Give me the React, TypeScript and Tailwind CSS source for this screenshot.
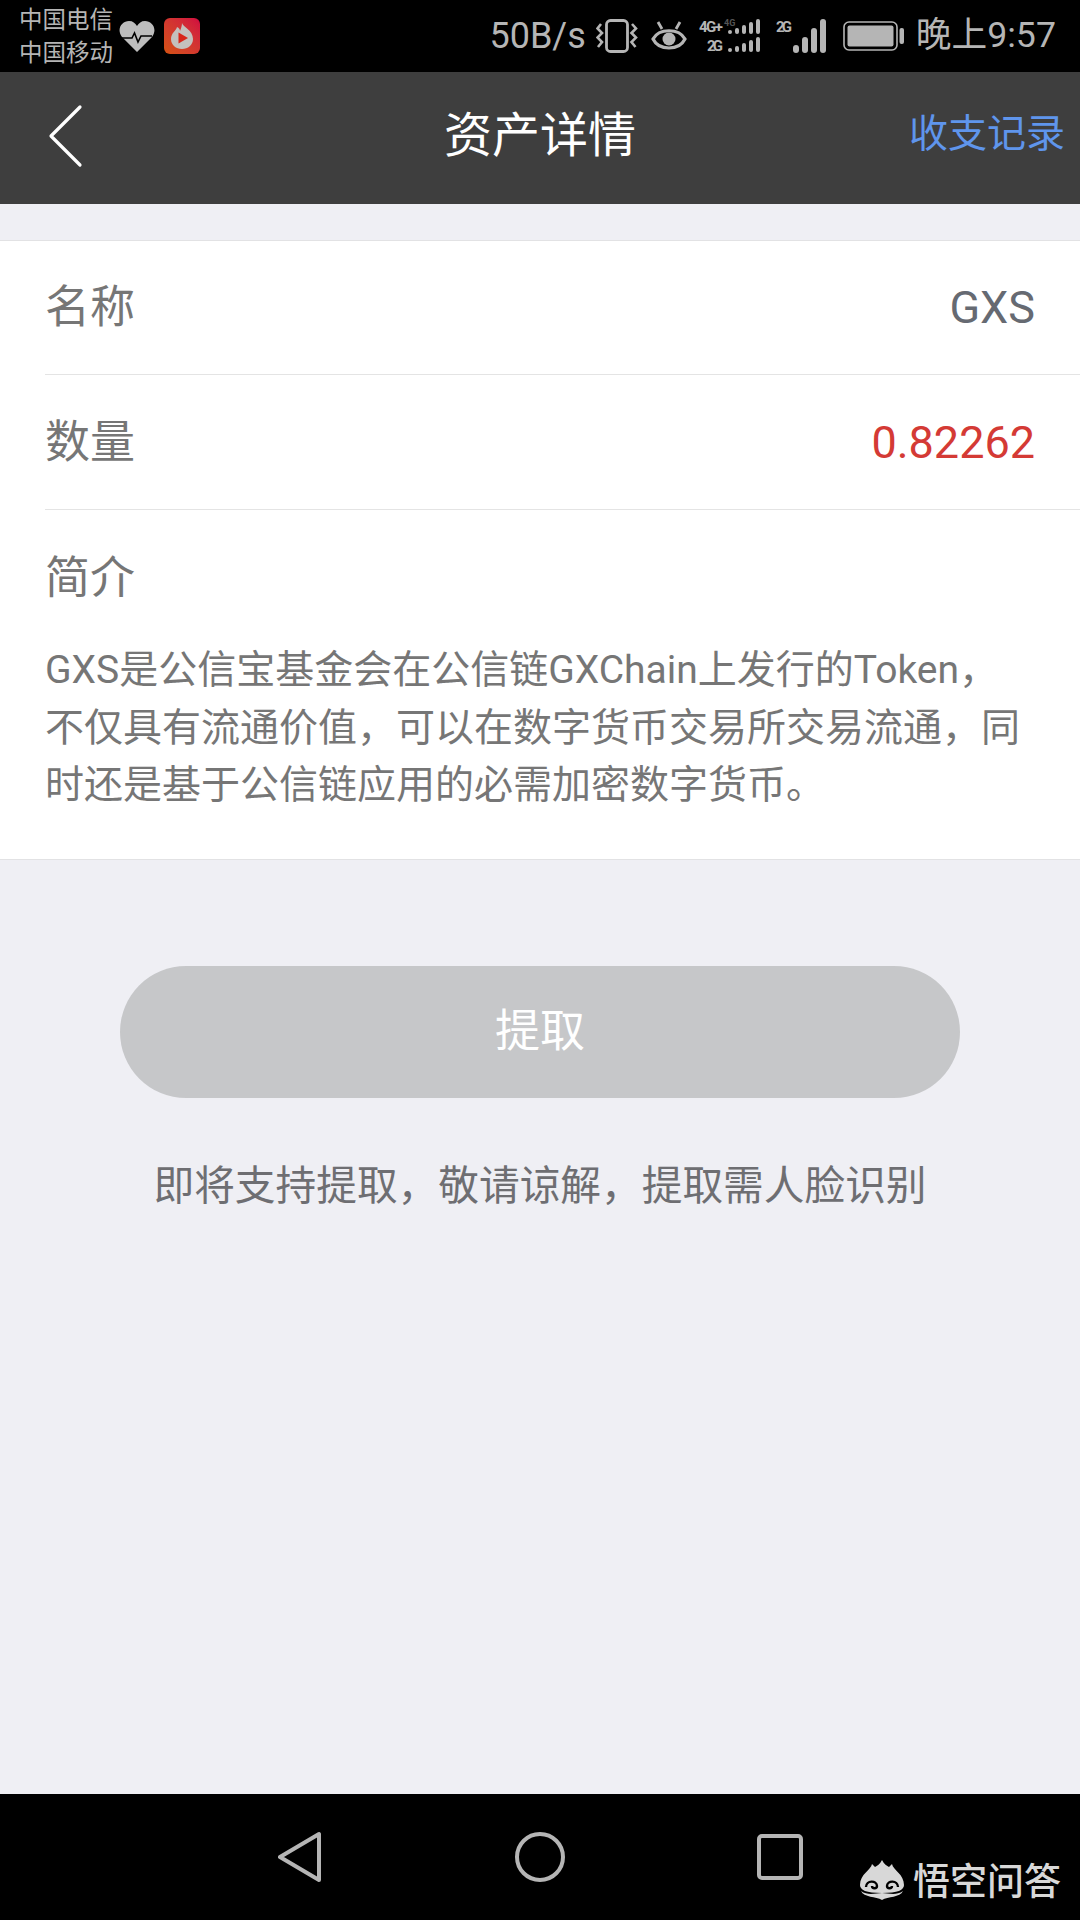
const cjk = "font-['Roboto','Noto_Sans_CJK_SC',sans-serif]"

const description = 'GXS是公信宝基金会在公信链GXChain上发行的Token，'
const rows = [
  { label: '名称', value: 'GXS', valueClass: 'text-[#666a72]', rowClass: 'h-[134px]' },
  { label: '数量', value: '0.82262', valueClass: 'text-[#d43a35]', rowClass: 'h-[135px]' },
]

function SignalBars({ x, y }: { x: number; y: number }) {
  const bars = [
    { dx: 0, h: 4 },
    { dx: 7, h: 6 },
    { dx: 14, h: 9 },
    { dx: 21, h: 12 },
    { dx: 28, h: 15 },
  ]
  return (
    <g fill="#b5b5b5">
      {bars.map((b) => (
        <rect key={b.dx} x={x + b.dx} y={y + 15 - b.h} width="4" height={b.h} rx="2" />
      ))}
    </g>
  )
}

function StatusBar() {
  return (
    <div className={`h-[72px] bg-black flex items-center text-[#b5b5b5] ${cjk}`}>
      <div className="ml-[19px] w-[96px] text-[23.5px] leading-[33px] pt-[2px]">
        <div>中国电信</div>
        <div>中国移动</div>
      </div>
      <svg className="ml-[4px] mt-[2px]" width="36" height="32" viewBox="0 0 36 32">
        <path d="M18 31 L3 16 C-3 8 3 0 10 0 C14 0 16 2 18 5 C20 2 22 0 26 0 C33 0 39 8 33 16 Z" fill="#bdbdbd" />
        <path d="M3 17 H13 L15.5 12 L19 21 L22 15 H33" fill="none" stroke="#000" strokeWidth="1.6" />
      </svg>
      <div className="ml-[9px] w-[36px] h-[36px] rounded-[6px] bg-gradient-to-tr from-[#d4510f] to-[#d1043f] flex items-center justify-center">
        <svg width="26" height="28" viewBox="0 0 26 28">
          <path d="M13 1 C14 5 24 8 24 17 C24 23 19 27 13 27 C7 27 2 23 2 17 C2 11 7 9 8 5 C10 6 11 7 11 9 C12 6 13 4 13 1 Z" fill="#c4c0bd" />
          <path d="M9.5 10.5 L19 16 L9.5 21.5 Z" fill="#d8261a" />
        </svg>
      </div>

      <span className="ml-auto text-[36px] leading-none">50B/s</span>

      <svg className="ml-[10px]" width="42" height="34" viewBox="0 0 42 34" fill="none" stroke="#b5b5b5">
        <rect x="10.5" y="1.5" width="21" height="31" rx="4" strokeWidth="2.8" />
        <path d="M5 5 L1.5 9.5 L6 14 L1.5 18.5 L6 23 L2 28" strokeWidth="2.6" />
        <path d="M36 5 L40 9.5 L35.5 14 L40 18.5 L35.5 23 L39.5 28" strokeWidth="2.6" />
      </svg>
      <svg className="ml-[13px]" width="36" height="30" viewBox="0 0 36 30" fill="none" stroke="#b5b5b5">
        <path d="M2 18 C8 7 28 7 34 18 C28 30 8 30 2 18 Z" strokeWidth="3.2" />
        <circle cx="18" cy="18" r="6.5" fill="#b5b5b5" stroke="none" />
        <path d="M7 1 L11 8 M29 1 L25 8" strokeWidth="2.8" />
      </svg>
      <svg className="ml-[12px]" width="64" height="36" viewBox="0 0 64 36">
        <text x="0" y="14" fontFamily="Roboto" fontWeight="700" fontSize="15" fill="#b5b5b5" textLength="24">4G+</text>
        <text x="25" y="8" fontFamily="Roboto" fontWeight="700" fontSize="9" fill="#555">4G</text>
        <text x="8" y="33" fontFamily="Roboto" fontWeight="700" fontSize="15" fill="#b5b5b5" textLength="16">2G</text>
        <SignalBars x={29} y={1} />
        <SignalBars x={29} y={19} />
      </svg>
      <svg className="ml-[13px]" width="51" height="36" viewBox="0 0 51 36">
        <text x="0" y="14" fontFamily="Roboto" fontWeight="700" fontSize="15" fill="#b5b5b5" textLength="16">2G</text>
        <rect x="17" y="27" width="6" height="8" rx="3" fill="#b5b5b5" />
        <rect x="26" y="19" width="6" height="16" rx="3" fill="#b5b5b5" />
        <rect x="35" y="10" width="6" height="25" rx="3" fill="#b5b5b5" />
        <rect x="44" y="1" width="6" height="34" rx="3" fill="#b5b5b5" />
      </svg>
      <svg className="ml-[16px]" width="61" height="30" viewBox="0 0 61 30">
        <rect x="1" y="1" width="53" height="28" rx="5" fill="none" stroke="#b5b5b5" strokeWidth="1.6" />
        <rect x="4.5" y="4.5" width="46" height="21" rx="2" fill="#b5b5b5" />
        <rect x="56.5" y="7" width="4.5" height="16" rx="2" fill="#b5b5b5" />
      </svg>
      <span className="ml-[12px] mr-[24px] text-[35.7px] leading-none">晚上9:57</span>
    </div>
  )
}

function NavBar() {
  return (
    <header className={`h-[132px] bg-[#3e3e3e] grid grid-cols-[1fr_auto_1fr] items-center ${cjk}`}>
      <svg className="ml-[47px] -mt-[4px]" width="36" height="64" viewBox="0 0 36 64" fill="none">
        <path d="M33 3 L4 32 L33 61" stroke="#fff" strokeWidth="3.2" strokeLinecap="round" strokeLinejoin="round" />
      </svg>
      <h1 className="text-[48px] leading-none font-normal text-white -mt-[5px]">资产详情</h1>
      <span className="justify-self-end mr-[15px] -mt-[8px] text-[39px] leading-none text-[#5f95ec]">收支记录</span>
    </header>
  )
}

function BottomNav() {
  return (
    <footer className="relative mt-auto h-[126px] bg-black pl-[278px] pt-[37px] flex items-start">
      <svg width="44" height="52" viewBox="0 0 44 52" fill="none">
        <path d="M41 3 V49 L2 26 Z" stroke="#b5b5b5" strokeWidth="4" strokeLinejoin="round" />
      </svg>
      <svg className="ml-[192px]" width="52" height="52" viewBox="0 0 52 52" fill="none">
        <circle cx="26" cy="26" r="23" stroke="#b5b5b5" strokeWidth="4" />
      </svg>
      <svg className="ml-[191px] mt-[3px]" width="46" height="46" viewBox="0 0 46 46" fill="none">
        <rect x="2" y="2" width="42" height="42" rx="3" stroke="#b5b5b5" strokeWidth="4" />
      </svg>
      <div className="absolute left-[860px] top-[64px] flex items-center text-[#d8d8d8]">
        <svg width="44" height="40" viewBox="0 0 44 40">
          <path d="M22 0 C24 4 27 6 29 7 C30 6 31 5 32 4 C33 10 44 14 44 25 C44 30 38 33 22 33 C6 33 0 30 0 25 C0 14 11 10 12 4 C13 5 14 6 15 7 C17 6 20 4 22 0 Z" fill="#d8d8d8" />
          <path d="M6 27 C6 20 17 20 17 26 C17 29 12 29 12 26 M38 27 C38 20 27 20 27 26 C27 29 32 29 32 26" fill="none" stroke="#000" strokeWidth="2.4" />
          <path d="M1 31 C8 36 16 33 22 33 C28 33 36 36 43 31 C40 38 28 36 22 40 C16 36 4 38 1 31 Z" fill="#d8d8d8" />
        </svg>
        <span className={`ml-[9px] mt-[6px] text-[37px] leading-none font-medium ${cjk}`}>悟空问答</span>
      </div>
    </footer>
  )
}

export default function App() {
  return (
    <div className="w-[1080px] h-[1920px] bg-[#efeff4] flex flex-col overflow-hidden">
      <StatusBar />
      <NavBar />

      <section className={`mt-[36px] bg-white border-y border-[#e2e2e4] ${cjk}`}>
        {rows.map(({ label, value, valueClass, rowClass }) => (
          <div key={label} className={`ml-[45px] pr-[45px] border-b border-[#e4e4e4] flex items-center justify-between ${rowClass}`}>
            <span className="text-[45px] leading-none text-[#767676]">{label}</span>
            <span className={`text-[45px] leading-none ${valueClass}`}>{value}</span>
          </div>
        ))}
        <div className="px-[45px] pt-[46px] pb-[44px]">
          <div className="text-[45px] leading-none text-[#767676]">简介</div>
          <p className="mt-[41px] text-[39px] leading-[57.5px] text-[#767676]">
            {description}
            <br />
            不仅具有流通价值，可以在数字货币交易所交易流通，同
            <br />
            时还是基于公信链应用的必需加密数字货币。
          </p>
        </div>
      </section>

      <button className={`mt-[106px] mx-[120px] h-[132px] rounded-[66px] bg-[#c6c7c9] text-[45px] text-white ${cjk}`}>
        提取
      </button>
      <p className={`mt-[68px] text-center text-[40.7px] leading-none text-[#6e6e72] ${cjk}`}>
        即将支持提取，敬请谅解，提取需人脸识别
      </p>

      <BottomNav />
    </div>
  )
}
